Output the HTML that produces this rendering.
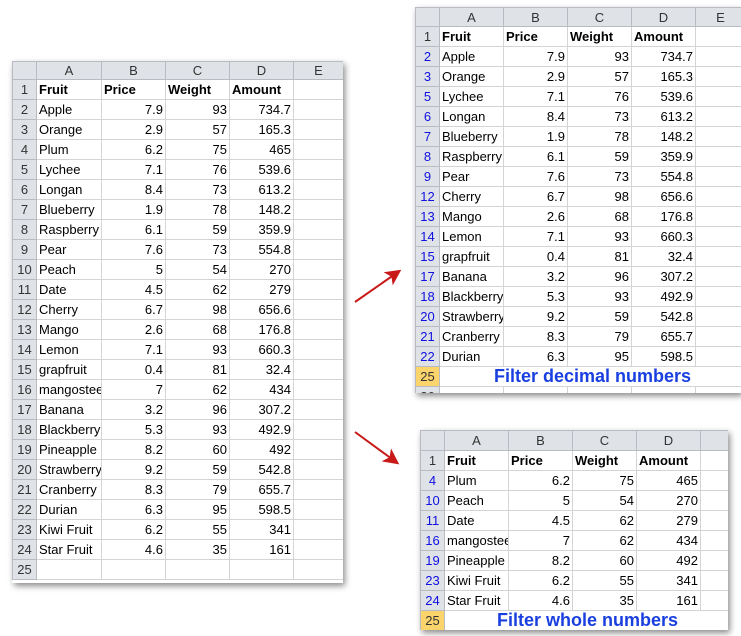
<!DOCTYPE html><html><head><style>
body{margin:0;width:741px;height:636px;background:#fff;position:relative;overflow:hidden;font-family:"Liberation Sans",Arial,sans-serif;font-size:13px}
.s{position:absolute;background:#fff;box-shadow:2px 3px 6px rgba(0,0,0,.45);overflow:hidden}
table{border-collapse:collapse;table-layout:fixed}
td{border:1px solid #d4d4d4;height:19px;padding:0 2px;white-space:nowrap;overflow:hidden;color:#000;line-height:15px}
tr.h td{background:#dfe3e8;color:#333;text-align:center;border-color:#b8bcc2}
td.r{background:#dfe3e8;text-align:center;color:#333;border-color:#b8bcc2}
td.b{color:#1010e0}
td.y{background:#fbd56b}
td.n{text-align:right}
tr.f td.t{font-weight:bold}
.lbl{color:#1a3fe0;font-weight:bold;font-size:18px;text-align:center}
tr.h1 td{height:17px}
tr.h2 td{height:18px}
</style></head><body>
<div class="s" style="left:12px;top:61px;width:331px;height:522px">
<table style="width:331px"><colgroup><col style="width:24px"><col style="width:65px"><col style="width:64px"><col style="width:64px"><col style="width:64px"><col style="width:50px"></colgroup>
<tr class="h h1"><td></td><td>A</td><td>B</td><td>C</td><td>D</td><td>E</td></tr>
<tr class="f"><td class="r">1</td><td class="t">Fruit</td><td class="t">Price</td><td class="t">Weight</td><td class="t">Amount</td><td></td></tr>
<tr><td class="r">2</td><td>Apple</td><td class="n">7.9</td><td class="n">93</td><td class="n">734.7</td><td></td></tr>
<tr><td class="r">3</td><td>Orange</td><td class="n">2.9</td><td class="n">57</td><td class="n">165.3</td><td></td></tr>
<tr><td class="r">4</td><td>Plum</td><td class="n">6.2</td><td class="n">75</td><td class="n">465</td><td></td></tr>
<tr><td class="r">5</td><td>Lychee</td><td class="n">7.1</td><td class="n">76</td><td class="n">539.6</td><td></td></tr>
<tr><td class="r">6</td><td>Longan</td><td class="n">8.4</td><td class="n">73</td><td class="n">613.2</td><td></td></tr>
<tr><td class="r">7</td><td>Blueberry</td><td class="n">1.9</td><td class="n">78</td><td class="n">148.2</td><td></td></tr>
<tr><td class="r">8</td><td>Raspberry</td><td class="n">6.1</td><td class="n">59</td><td class="n">359.9</td><td></td></tr>
<tr><td class="r">9</td><td>Pear</td><td class="n">7.6</td><td class="n">73</td><td class="n">554.8</td><td></td></tr>
<tr><td class="r">10</td><td>Peach</td><td class="n">5</td><td class="n">54</td><td class="n">270</td><td></td></tr>
<tr><td class="r">11</td><td>Date</td><td class="n">4.5</td><td class="n">62</td><td class="n">279</td><td></td></tr>
<tr><td class="r">12</td><td>Cherry</td><td class="n">6.7</td><td class="n">98</td><td class="n">656.6</td><td></td></tr>
<tr><td class="r">13</td><td>Mango</td><td class="n">2.6</td><td class="n">68</td><td class="n">176.8</td><td></td></tr>
<tr><td class="r">14</td><td>Lemon</td><td class="n">7.1</td><td class="n">93</td><td class="n">660.3</td><td></td></tr>
<tr><td class="r">15</td><td>grapfruit</td><td class="n">0.4</td><td class="n">81</td><td class="n">32.4</td><td></td></tr>
<tr><td class="r">16</td><td>mangosteen</td><td class="n">7</td><td class="n">62</td><td class="n">434</td><td></td></tr>
<tr><td class="r">17</td><td>Banana</td><td class="n">3.2</td><td class="n">96</td><td class="n">307.2</td><td></td></tr>
<tr><td class="r">18</td><td>Blackberry</td><td class="n">5.3</td><td class="n">93</td><td class="n">492.9</td><td></td></tr>
<tr><td class="r">19</td><td>Pineapple</td><td class="n">8.2</td><td class="n">60</td><td class="n">492</td><td></td></tr>
<tr><td class="r">20</td><td>Strawberry</td><td class="n">9.2</td><td class="n">59</td><td class="n">542.8</td><td></td></tr>
<tr><td class="r">21</td><td>Cranberry</td><td class="n">8.3</td><td class="n">79</td><td class="n">655.7</td><td></td></tr>
<tr><td class="r">22</td><td>Durian</td><td class="n">6.3</td><td class="n">95</td><td class="n">598.5</td><td></td></tr>
<tr><td class="r">23</td><td>Kiwi Fruit</td><td class="n">6.2</td><td class="n">55</td><td class="n">341</td><td></td></tr>
<tr><td class="r">24</td><td>Star Fruit</td><td class="n">4.6</td><td class="n">35</td><td class="n">161</td><td></td></tr>
<tr><td class="r">25</td><td></td><td></td><td></td><td></td><td></td></tr>
</table></div>

<div class="s" style="left:415px;top:7px;width:326px;height:386px">
<table style="width:330px"><colgroup><col style="width:24px"><col style="width:64px"><col style="width:64px"><col style="width:64px"><col style="width:64px"><col style="width:50px"></colgroup>
<tr class="h h2"><td></td><td>A</td><td>B</td><td>C</td><td>D</td><td>E</td></tr>
<tr class="f"><td class="r">1</td><td class="t">Fruit</td><td class="t">Price</td><td class="t">Weight</td><td class="t">Amount</td><td></td></tr>
<tr><td class="r b">2</td><td>Apple</td><td class="n">7.9</td><td class="n">93</td><td class="n">734.7</td><td></td></tr>
<tr><td class="r b">3</td><td>Orange</td><td class="n">2.9</td><td class="n">57</td><td class="n">165.3</td><td></td></tr>
<tr><td class="r b">5</td><td>Lychee</td><td class="n">7.1</td><td class="n">76</td><td class="n">539.6</td><td></td></tr>
<tr><td class="r b">6</td><td>Longan</td><td class="n">8.4</td><td class="n">73</td><td class="n">613.2</td><td></td></tr>
<tr><td class="r b">7</td><td>Blueberry</td><td class="n">1.9</td><td class="n">78</td><td class="n">148.2</td><td></td></tr>
<tr><td class="r b">8</td><td>Raspberry</td><td class="n">6.1</td><td class="n">59</td><td class="n">359.9</td><td></td></tr>
<tr><td class="r b">9</td><td>Pear</td><td class="n">7.6</td><td class="n">73</td><td class="n">554.8</td><td></td></tr>
<tr><td class="r b">12</td><td>Cherry</td><td class="n">6.7</td><td class="n">98</td><td class="n">656.6</td><td></td></tr>
<tr><td class="r b">13</td><td>Mango</td><td class="n">2.6</td><td class="n">68</td><td class="n">176.8</td><td></td></tr>
<tr><td class="r b">14</td><td>Lemon</td><td class="n">7.1</td><td class="n">93</td><td class="n">660.3</td><td></td></tr>
<tr><td class="r b">15</td><td>grapfruit</td><td class="n">0.4</td><td class="n">81</td><td class="n">32.4</td><td></td></tr>
<tr><td class="r b">17</td><td>Banana</td><td class="n">3.2</td><td class="n">96</td><td class="n">307.2</td><td></td></tr>
<tr><td class="r b">18</td><td>Blackberry</td><td class="n">5.3</td><td class="n">93</td><td class="n">492.9</td><td></td></tr>
<tr><td class="r b">20</td><td>Strawberry</td><td class="n">9.2</td><td class="n">59</td><td class="n">542.8</td><td></td></tr>
<tr><td class="r b">21</td><td>Cranberry</td><td class="n">8.3</td><td class="n">79</td><td class="n">655.7</td><td></td></tr>
<tr><td class="r b">22</td><td>Durian</td><td class="n">6.3</td><td class="n">95</td><td class="n">598.5</td><td></td></tr>
<tr><td class="r y">25</td><td colspan="5" class="lbl">Filter decimal numbers</td></tr>
<tr><td class="r">26</td><td></td><td></td><td></td><td></td><td></td></tr>
</table></div>

<div class="s" style="left:420px;top:430px;width:308px;height:200px">
<table style="width:330px"><colgroup><col style="width:24px"><col style="width:64px"><col style="width:64px"><col style="width:64px"><col style="width:64px"><col style="width:50px"></colgroup>
<tr class="h"><td></td><td>A</td><td>B</td><td>C</td><td>D</td><td></td></tr>
<tr class="f"><td class="r">1</td><td class="t">Fruit</td><td class="t">Price</td><td class="t">Weight</td><td class="t">Amount</td><td></td></tr>
<tr><td class="r b">4</td><td>Plum</td><td class="n">6.2</td><td class="n">75</td><td class="n">465</td><td></td></tr>
<tr><td class="r b">10</td><td>Peach</td><td class="n">5</td><td class="n">54</td><td class="n">270</td><td></td></tr>
<tr><td class="r b">11</td><td>Date</td><td class="n">4.5</td><td class="n">62</td><td class="n">279</td><td></td></tr>
<tr><td class="r b">16</td><td>mangosteen</td><td class="n">7</td><td class="n">62</td><td class="n">434</td><td></td></tr>
<tr><td class="r b">19</td><td>Pineapple</td><td class="n">8.2</td><td class="n">60</td><td class="n">492</td><td></td></tr>
<tr><td class="r b">23</td><td>Kiwi Fruit</td><td class="n">6.2</td><td class="n">55</td><td class="n">341</td><td></td></tr>
<tr><td class="r b">24</td><td>Star Fruit</td><td class="n">4.6</td><td class="n">35</td><td class="n">161</td><td></td></tr>
<tr><td class="r y">25</td><td colspan="5" class="lbl" style="text-align:left;padding-left:52px">Filter whole numbers</td></tr>
</table></div>

<svg style="position:absolute;left:0;top:0" width="741" height="636">
<defs><marker id="m" markerWidth="8" markerHeight="8" refX="6" refY="4" orient="auto"><path d="M0,0 L8,4 L0,8 L2,4z" fill="#c81818"/></marker></defs>
<line x1="355" y1="302" x2="398" y2="272" stroke="#c81818" stroke-width="2" marker-end="url(#m)"/>
<line x1="355" y1="432" x2="396" y2="462" stroke="#c81818" stroke-width="2" marker-end="url(#m)"/>
</svg>
</body></html>
